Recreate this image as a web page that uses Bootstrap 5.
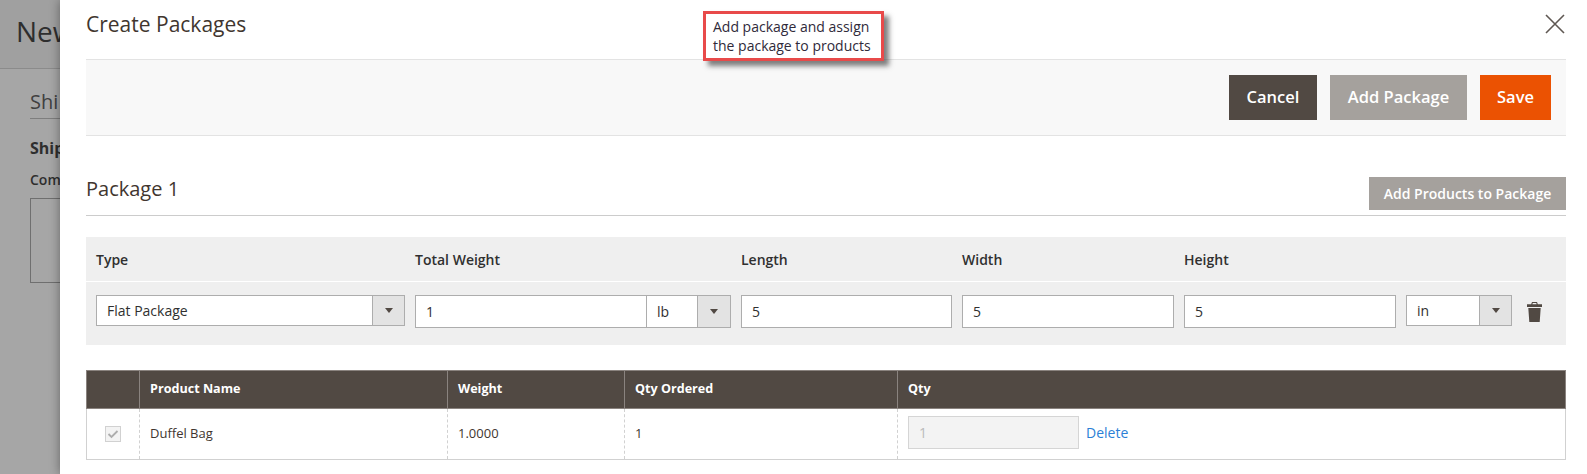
<!DOCTYPE html>
<html lang="en">
<head>
    <meta charset="UTF-8">
    <meta name="viewport" content="width=device-width, initial-scale=1.0">
    <title>Create Packages</title>
    <link href="https://cdn.jsdelivr.net/npm/bootstrap@5.3.0/dist/css/bootstrap.min.css" rel="stylesheet">
    <style>
        html, body {
            height: 100%;
        }
        body {
            font-family: "Open Sans", "Liberation Sans", sans-serif;
            color: #303030;
            overflow: hidden;
            background: #a6a6a6;
        }

        /* page dimmed behind the slide panel */
        .behind {
            height: 474px;
            background: #a6a6a6;
            color: #2e2e2e;
        }
        .behind-title {
            height: 69px;
            padding: 12px 0 0 16px;
            font-size: 28px;
            line-height: 38px;
            background: #a0a0a0;
            border-bottom: 1px solid #8b8b8b;
        }
        .behind-body {
            padding: 19px 0 0 30px;
        }
        .behind-section {
            font-size: 20px;
            line-height: 27px;
            padding-bottom: 3px;
            border-bottom: 1px solid #7e7e7e;
            color: #404040;
        }
        .behind-sub {
            margin-top: 18px;
            font-size: 16px;
            line-height: 22px;
            font-weight: 700;
        }
        .behind-label {
            margin-top: 12px;
            font-size: 14px;
            line-height: 18px;
            font-weight: 600;
        }
        .behind-box {
            margin-top: 9px;
            height: 85px;
            border: 1px solid #6f6f6f;
        }

        /* slide panel */
        .slide-panel {
            position: absolute;
            top: 0;
            left: 60px;
            right: 0;
            bottom: 0;
            background: #fff;
            box-shadow: 0 0 10px rgba(0, 0, 0, .4);
            padding: 0 21px 0 26px;
        }
        .panel-head {
            height: 59px;
            padding-top: 8px;
        }
        .panel-title {
            font-size: 21px;
            line-height: 32px;
            font-weight: 400;
            color: #41362f;
            margin: 0;
        }
        .close-x {
            position: absolute;
            top: 14px;
            right: 22px;
            width: 20px;
            height: 20px;
            padding: 0;
            border: 0;
            background: none;
            line-height: 0;
        }
        .callout {
            position: absolute;
            top: 11px;
            left: 643px;
            width: 181px;
            height: 50px;
            padding: 3px 0 0 7px;
            background: #fff;
            border: 3px solid #e84a4a;
            box-shadow: 5px 5px 5px rgba(60, 60, 60, .65);
            font-size: 14px;
            line-height: 19px;
            color: #302a3a;
            white-space: nowrap;
            z-index: 2;
        }
        .page-actions {
            height: 77px;
            background: #f8f8f8;
            border-top: 1px solid #e3e3e3;
            border-bottom: 1px solid #e3e3e3;
            padding: 15px 15px 0 0;
            gap: 13px;
        }
        .btn-m {
            border: 0;
            border-radius: 0;
            font-weight: 600;
            color: #fff;
            font-size: 16.5px;
            height: 45px;
            padding: 0;
            white-space: nowrap;
        }
        .btn-m:hover, .btn-m:disabled {
            color: #fff;
        }
        .btn-cancel { width: 88px; background: #514943; }
        .btn-add { width: 137px; background: #a5a19d; }
        .btn-save { width: 71px; background: #eb5202; }
        .btn-cancel:hover { background: #514943; }
        .btn-add:hover { background: #a5a19d; }
        .btn-save:hover { background: #eb5202; }
        .btn-add-products {
            width: 197px;
            height: 33px;
            font-size: 14px;
            background: #a5a19d;
        }
        .btn-add-products:hover { background: #a5a19d; }

        .pkg-head {
            margin-top: 41px;
            height: 39px;
            border-bottom: 1px solid #ccc;
        }
        .pkg-title {
            font-size: 20px;
            line-height: 24px;
            font-weight: 400;
            color: #41362f;
            margin: 0;
        }

        /* package dimensions */
        .dims {
            margin-top: 21px;
            background: #efefef;
        }
        .dims-row {
            display: grid;
            grid-template-columns: 309px 316px 211px 212px 212px 106px 1fr;
            column-gap: 10px;
            padding-left: 10px;
        }
        .dims-labels {
            height: 45px;
            align-items: center;
            border-bottom: 1px solid #fff;
            font-size: 14px;
            font-weight: 600;
            color: #303030;
        }
        .dims-inputs {
            height: 63px;
            padding-top: 13px;
        }
        .text-field {
            width: 100%;
            height: 33px;
            border: 1px solid #adadad;
            background: #fff;
            padding: 0 10px;
            font-size: 14px;
            color: #303030;
            border-radius: 0;
        }
        .select-field {
            display: flex;
            height: 31px;
            border: 1px solid #adadad;
            background: #fff;
        }
        .select-field select {
            flex: 1 1 auto;
            min-width: 0;
            appearance: none;
            border: 0;
            background: none;
            padding: 0 10px;
            font-size: 14px;
            color: #303030;
        }
        .select-arrow {
            flex: 0 0 32px;
            background: #e3e3e3;
            border-left: 1px solid #adadad;
            display: flex;
            align-items: center;
            justify-content: center;
        }
        .select-arrow::after {
            content: "";
            border-left: 4px solid transparent;
            border-right: 4px solid transparent;
            border-top: 5px solid #514943;
        }
        .weight-group {
            display: flex;
            height: 33px;
        }
        .weight-group .text-field {
            flex: 1 1 auto;
            min-width: 0;
            border-right: 0;
        }
        .weight-group .select-field {
            flex: 0 0 85px;
            height: 33px;
        }
        .weight-group .select-arrow {
            flex-basis: 33px;
        }
        .trash-btn {
            border: 0;
            background: none;
            padding: 0;
            width: 15px;
            height: 20px;
            margin: 7px 0 0 5px;
            line-height: 0;
        }

        /* products table */
        .products {
            margin: 25px 0 0 0;
            width: 1480px;
            table-layout: fixed;
            font-size: 13px;
            border: 1px solid #d1d1d1;
        }
        .products th {
            background: #514943;
            color: #fff;
            font-size: 12.6px;
            font-weight: 700;
            height: 38px;
            padding: 0 10px;
            vertical-align: middle;
            border: 1px solid #8a837f;
            box-shadow: none;
        }
        .products td {
            height: 51px;
            padding: 0 10px;
            vertical-align: middle;
            color: #41362f;
            border: 0;
            border-right: 1px dashed #d1d1d1;
            box-shadow: none;
        }
        .products td:last-child {
            border-right: 1px solid #d1d1d1;
        }
        .products tr:last-child td {
            border-bottom: 1px solid #d1d1d1;
        }
        .check-box {
            display: block;
            width: 16px;
            height: 16px;
            margin: 0 0 0 8px;
            background: #f3f3f3;
            border: 1px solid #d1d1d1;
            line-height: 0;
        }
        .qty-cell {
            gap: 7px;
        }
        .qty-field {
            width: 171px;
            height: 33px;
            border: 1px solid #d5d5d5;
            background: #f3f3f3;
            padding: 0 10px;
            font-size: 14px;
            color: #bbb;
            border-radius: 0;
        }
        .delete-link {
            font-size: 14px;
            color: #2b7fd6;
            text-decoration: none;
        }
    </style>
</head>
<body>
    <div class="behind">
        <div class="behind-title">New</div>
        <div class="behind-body">
            <div class="behind-section">Shi</div>
            <div class="behind-sub">Ship</div>
            <div class="behind-label">Com</div>
            <div class="behind-box"></div>
        </div>
    </div>

    <div class="slide-panel">
        <div class="panel-head">
            <h1 class="panel-title">Create Packages</h1>
        </div>
        <button type="button" class="close-x" aria-label="Close">
            <svg width="20" height="20" viewBox="0 0 20 20"><path d="M1 1 19 19M19 1 1 19" stroke="#5f5853" stroke-width="1.6" fill="none"/></svg>
        </button>
        <div class="callout">Add package and assign<br>the package to products</div>

        <div class="page-actions d-flex justify-content-end">
            <button type="button" class="btn btn-m btn-cancel">Cancel</button>
            <button type="button" class="btn btn-m btn-add">Add Package</button>
            <button type="button" class="btn btn-m btn-save">Save</button>
        </div>

        <div class="pkg-head d-flex justify-content-between align-items-start">
            <h2 class="pkg-title">Package 1</h2>
            <button type="button" class="btn btn-m btn-add-products">Add Products to Package</button>
        </div>

        <div class="dims">
            <div class="dims-row dims-labels">
                <span>Type</span>
                <span>Total Weight</span>
                <span>Length</span>
                <span>Width</span>
                <span>Height</span>
            </div>
            <div class="dims-row dims-inputs">
                <div class="select-field">
                    <select><option>Flat Package</option></select>
                    <span class="select-arrow"></span>
                </div>
                <div class="weight-group">
                    <input type="text" class="text-field" value="1">
                    <div class="select-field">
                        <select><option>lb</option></select>
                        <span class="select-arrow"></span>
                    </div>
                </div>
                <div><input type="text" class="text-field" value="5"></div>
                <div><input type="text" class="text-field" value="5"></div>
                <div><input type="text" class="text-field" value="5"></div>
                <div class="select-field">
                    <select><option>in</option></select>
                    <span class="select-arrow"></span>
                </div>
                <div>
                    <button type="button" class="trash-btn" aria-label="Delete package">
                        <svg width="15" height="20" viewBox="0 0 15 20"><path fill="#514943" d="M5 0h5l.8 2.2H15V5H0V2.2h4.200zM5.700 1l-.3 1.200h4.200L9.300 1zM1.300 6h12.400l-1 14H2.300z"/></svg>
                    </button>
                </div>
            </div>
        </div>

        <table class="table products">
            <colgroup>
                <col style="width:53px">
                <col style="width:308px">
                <col style="width:177px">
                <col style="width:273px">
                <col>
            </colgroup>
            <thead>
                <tr>
                    <th></th>
                    <th>Product Name</th>
                    <th>Weight</th>
                    <th>Qty Ordered</th>
                    <th>Qty</th>
                </tr>
            </thead>
            <tbody>
                <tr>
                    <td>
                        <span class="check-box">
                            <svg width="14" height="14" viewBox="0 0 14 14"><path d="M2.500 7 5.500 10 11.500 4" stroke="#adadad" stroke-width="1.800" fill="none"/></svg>
                        </span>
                    </td>
                    <td>Duffel Bag</td>
                    <td>1.0000</td>
                    <td>1</td>
                    <td>
                        <div class="qty-cell d-flex align-items-center mb-1">
                            <input type="text" class="qty-field" value="1" disabled>
                            <a href="#" class="delete-link">Delete</a>
                        </div>
                    </td>
                </tr>
            </tbody>
        </table>
    </div>
</body>
</html>
